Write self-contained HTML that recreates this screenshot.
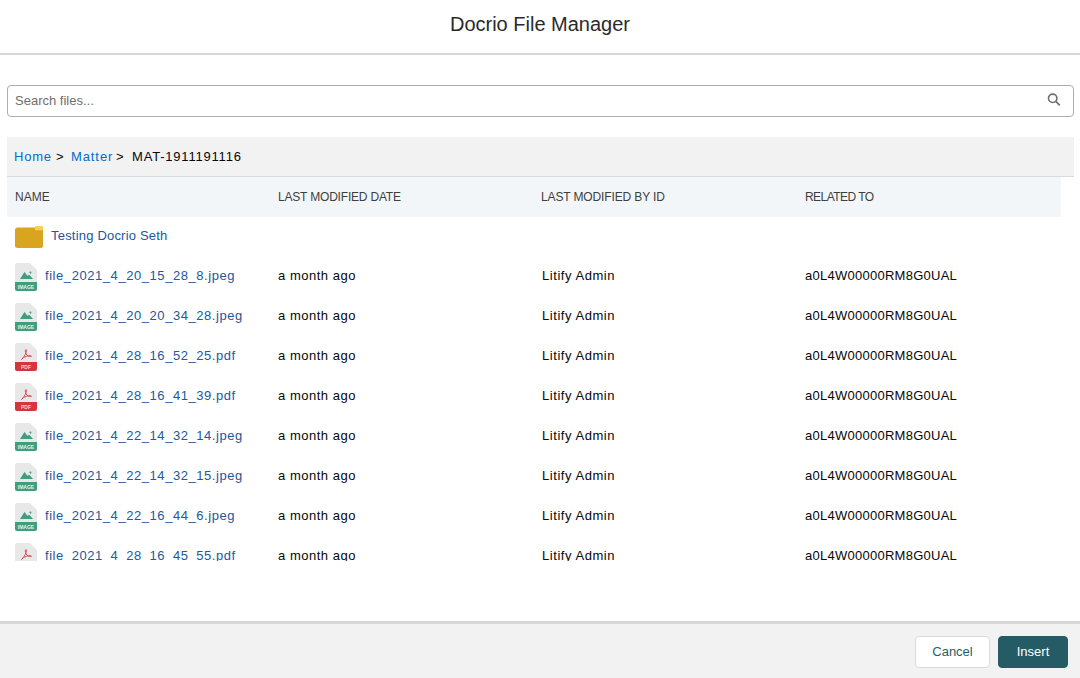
<!DOCTYPE html>
<html><head><meta charset="utf-8">
<style>
*{box-sizing:border-box;margin:0;padding:0}
html,body{width:1080px;height:678px;overflow:hidden;background:#fff;font-family:"Liberation Sans",sans-serif;color:#080707}
.a{position:absolute;white-space:nowrap}
.title{left:0;top:0;width:1080px;height:53px;text-align:center;font-size:20px;line-height:48px;color:#2a2a2a}
.hline{left:0;top:53px;width:1080px;height:2px;background:#d9d7d5}
.search{left:7px;top:85px;width:1067px;height:32px;border:1px solid #b0adab;border-radius:4px;background:#fff}
.ph{left:7px;top:0;line-height:30px;font-size:13px;color:#706e6b}
.crumb{left:7px;top:137px;width:1067px;height:40px;background:#f3f2f2;border-bottom:1px solid #dddbda}
.ct{top:137px;line-height:39px;font-size:13px}
.lk{color:#006dcc}
.thead{left:7px;top:177px;width:1054px;height:40px;background:#f3f6f9}
.th{top:177px;line-height:40px;font-size:12px;color:#3e3e3c}
.clip{left:0;top:217px;width:1080px;height:344px;overflow:hidden}
.row{position:absolute;left:0;width:1080px;height:40px}
.td{top:0;line-height:40px;font-size:13px;color:#080707}
.nm{color:#23579e}
.foot{left:0;top:621px;width:1080px;height:57px;background:#f2f2f2;border-top:3px solid #d9d8d6}
.btn{height:32px;border-radius:4px;font-size:13px;line-height:30px;text-align:center}
.cancel{left:915px;top:636px;width:75px;background:#fff;border:1px solid #dddbda;color:#235f6b}
.insert{left:998px;top:636px;width:70px;background:#255b65;border:1px solid #255b65;color:#fff}
</style></head><body>
<div class="a title">Docrio File Manager</div>
<div class="a hline"></div>
<div class="a search"><span class="a ph">Search files...</span><svg class="a" style="left:1029px;top:3px" width="24" height="24" viewBox="0 0 24 24"><circle cx="15.7" cy="9.3" r="4.2" fill="none" stroke="#706e6b" stroke-width="1.6"/><line x1="18.8" y1="12.4" x2="22.8" y2="16.4" stroke="#706e6b" stroke-width="1.6"/></svg></div>
<div class="a crumb"></div>
<span class="a ct lk" style="left:14px;letter-spacing:0.8px">Home</span>
<span class="a ct" style="left:56px">&gt;</span>
<span class="a ct lk" style="left:71px;letter-spacing:0.9px">Matter</span>
<span class="a ct" style="left:116px">&gt;</span>
<span class="a ct" style="left:132px;letter-spacing:0.8px">MAT-1911191116</span>
<div class="a thead"></div>
<span class="a th" style="left:15px">NAME</span>
<span class="a th" style="left:278px;letter-spacing:-0.19px">LAST MODIFIED DATE</span>
<span class="a th" style="left:541px;letter-spacing:-0.13px">LAST MODIFIED BY ID</span>
<span class="a th" style="left:805px;letter-spacing:-0.55px">RELATED TO</span>
<div class="a clip">
<div class="row" style="top:-1px"><svg class="a" style="left:15px;top:10px" width="28" height="22" viewBox="0 0 28 22"><rect x="0" y="1.5" width="28" height="20.5" rx="2.5" fill="#d9a521"/><path d="M20 0H27Q28 0 28 1V4.2H20Z" fill="#f8ce5a"/></svg><span class="a td nm" style="left:51px;letter-spacing:0.2px">Testing Docrio Seth</span></div>
<div class="row" style="top:39px"><svg class="a" style="left:15px;top:7px" width="22" height="28" viewBox="0 0 22 28"><path d="M2 0H15L22 7V26Q22 28 20 28H2Q0 28 0 26V2Q0 0 2 0Z" fill="#e8e8e8"/><path d="M0 19H22V26Q22 28 20 28H2Q0 28 0 26Z" fill="#3e9e7e"/><path d="M5 16L9.5 9L12.5 13L14 11.5L18 16Z" fill="#3e9e7e"/><circle cx="15.5" cy="9.5" r="1" fill="#3e9e7e"/><text x="11" y="26" font-size="5" font-weight="bold" fill="#e0f0ea" text-anchor="middle" font-family="Liberation Sans">IMAGE</text></svg><span class="a td nm" style="left:45px;letter-spacing:0.56px">file_2021_4_20_15_28_8.jpeg</span><span class="a td" style="left:278px;letter-spacing:0.52px">a month ago</span><span class="a td" style="left:542px;letter-spacing:0.55px">Litify Admin</span><span class="a td" style="left:805px;letter-spacing:0.26px">a0L4W00000RM8G0UAL</span></div>
<div class="row" style="top:79px"><svg class="a" style="left:15px;top:7px" width="22" height="28" viewBox="0 0 22 28"><path d="M2 0H15L22 7V26Q22 28 20 28H2Q0 28 0 26V2Q0 0 2 0Z" fill="#e8e8e8"/><path d="M0 19H22V26Q22 28 20 28H2Q0 28 0 26Z" fill="#3e9e7e"/><path d="M5 16L9.5 9L12.5 13L14 11.5L18 16Z" fill="#3e9e7e"/><circle cx="15.5" cy="9.5" r="1" fill="#3e9e7e"/><text x="11" y="26" font-size="5" font-weight="bold" fill="#e0f0ea" text-anchor="middle" font-family="Liberation Sans">IMAGE</text></svg><span class="a td nm" style="left:45px;letter-spacing:0.56px">file_2021_4_20_20_34_28.jpeg</span><span class="a td" style="left:278px;letter-spacing:0.52px">a month ago</span><span class="a td" style="left:542px;letter-spacing:0.55px">Litify Admin</span><span class="a td" style="left:805px;letter-spacing:0.26px">a0L4W00000RM8G0UAL</span></div>
<div class="row" style="top:119px"><svg class="a" style="left:15px;top:7px" width="22" height="28" viewBox="0 0 22 28"><path d="M2 0H15L22 7V26Q22 28 20 28H2Q0 28 0 26V2Q0 0 2 0Z" fill="#e8e8e8"/><path d="M0 19H22V26Q22 28 20 28H2Q0 28 0 26Z" fill="#d6353d"/><path d="M11 6.5C10 6.5 10.2 9 11 10.8C12 12.8 14 13.6 15.8 13.6C17 13.6 16.6 12.6 15 12.6C13 12.6 9.5 13.8 7.2 15.4C6 16.3 6.3 16.9 7.1 16.1C8.3 14.8 10.5 11.5 11.1 9.5C11.6 7.6 11.6 6.5 11 6.5Z" stroke="#dc5258" stroke-width="1" fill="none" stroke-linejoin="round"/><text x="11" y="26" font-size="5" font-weight="bold" fill="#f6d0d2" text-anchor="middle" font-family="Liberation Sans">PDF</text></svg><span class="a td nm" style="left:45px;letter-spacing:0.56px">file_2021_4_28_16_52_25.pdf</span><span class="a td" style="left:278px;letter-spacing:0.52px">a month ago</span><span class="a td" style="left:542px;letter-spacing:0.55px">Litify Admin</span><span class="a td" style="left:805px;letter-spacing:0.26px">a0L4W00000RM8G0UAL</span></div>
<div class="row" style="top:159px"><svg class="a" style="left:15px;top:7px" width="22" height="28" viewBox="0 0 22 28"><path d="M2 0H15L22 7V26Q22 28 20 28H2Q0 28 0 26V2Q0 0 2 0Z" fill="#e8e8e8"/><path d="M0 19H22V26Q22 28 20 28H2Q0 28 0 26Z" fill="#d6353d"/><path d="M11 6.5C10 6.5 10.2 9 11 10.8C12 12.8 14 13.6 15.8 13.6C17 13.6 16.6 12.6 15 12.6C13 12.6 9.5 13.8 7.2 15.4C6 16.3 6.3 16.9 7.1 16.1C8.3 14.8 10.5 11.5 11.1 9.5C11.6 7.6 11.6 6.5 11 6.5Z" stroke="#dc5258" stroke-width="1" fill="none" stroke-linejoin="round"/><text x="11" y="26" font-size="5" font-weight="bold" fill="#f6d0d2" text-anchor="middle" font-family="Liberation Sans">PDF</text></svg><span class="a td nm" style="left:45px;letter-spacing:0.56px">file_2021_4_28_16_41_39.pdf</span><span class="a td" style="left:278px;letter-spacing:0.52px">a month ago</span><span class="a td" style="left:542px;letter-spacing:0.55px">Litify Admin</span><span class="a td" style="left:805px;letter-spacing:0.26px">a0L4W00000RM8G0UAL</span></div>
<div class="row" style="top:199px"><svg class="a" style="left:15px;top:7px" width="22" height="28" viewBox="0 0 22 28"><path d="M2 0H15L22 7V26Q22 28 20 28H2Q0 28 0 26V2Q0 0 2 0Z" fill="#e8e8e8"/><path d="M0 19H22V26Q22 28 20 28H2Q0 28 0 26Z" fill="#3e9e7e"/><path d="M5 16L9.5 9L12.5 13L14 11.5L18 16Z" fill="#3e9e7e"/><circle cx="15.5" cy="9.5" r="1" fill="#3e9e7e"/><text x="11" y="26" font-size="5" font-weight="bold" fill="#e0f0ea" text-anchor="middle" font-family="Liberation Sans">IMAGE</text></svg><span class="a td nm" style="left:45px;letter-spacing:0.56px">file_2021_4_22_14_32_14.jpeg</span><span class="a td" style="left:278px;letter-spacing:0.52px">a month ago</span><span class="a td" style="left:542px;letter-spacing:0.55px">Litify Admin</span><span class="a td" style="left:805px;letter-spacing:0.26px">a0L4W00000RM8G0UAL</span></div>
<div class="row" style="top:239px"><svg class="a" style="left:15px;top:7px" width="22" height="28" viewBox="0 0 22 28"><path d="M2 0H15L22 7V26Q22 28 20 28H2Q0 28 0 26V2Q0 0 2 0Z" fill="#e8e8e8"/><path d="M0 19H22V26Q22 28 20 28H2Q0 28 0 26Z" fill="#3e9e7e"/><path d="M5 16L9.5 9L12.5 13L14 11.5L18 16Z" fill="#3e9e7e"/><circle cx="15.5" cy="9.5" r="1" fill="#3e9e7e"/><text x="11" y="26" font-size="5" font-weight="bold" fill="#e0f0ea" text-anchor="middle" font-family="Liberation Sans">IMAGE</text></svg><span class="a td nm" style="left:45px;letter-spacing:0.56px">file_2021_4_22_14_32_15.jpeg</span><span class="a td" style="left:278px;letter-spacing:0.52px">a month ago</span><span class="a td" style="left:542px;letter-spacing:0.55px">Litify Admin</span><span class="a td" style="left:805px;letter-spacing:0.26px">a0L4W00000RM8G0UAL</span></div>
<div class="row" style="top:279px"><svg class="a" style="left:15px;top:7px" width="22" height="28" viewBox="0 0 22 28"><path d="M2 0H15L22 7V26Q22 28 20 28H2Q0 28 0 26V2Q0 0 2 0Z" fill="#e8e8e8"/><path d="M0 19H22V26Q22 28 20 28H2Q0 28 0 26Z" fill="#3e9e7e"/><path d="M5 16L9.5 9L12.5 13L14 11.5L18 16Z" fill="#3e9e7e"/><circle cx="15.5" cy="9.5" r="1" fill="#3e9e7e"/><text x="11" y="26" font-size="5" font-weight="bold" fill="#e0f0ea" text-anchor="middle" font-family="Liberation Sans">IMAGE</text></svg><span class="a td nm" style="left:45px;letter-spacing:0.56px">file_2021_4_22_16_44_6.jpeg</span><span class="a td" style="left:278px;letter-spacing:0.52px">a month ago</span><span class="a td" style="left:542px;letter-spacing:0.55px">Litify Admin</span><span class="a td" style="left:805px;letter-spacing:0.26px">a0L4W00000RM8G0UAL</span></div>
<div class="row" style="top:319px"><svg class="a" style="left:15px;top:7px" width="22" height="28" viewBox="0 0 22 28"><path d="M2 0H15L22 7V26Q22 28 20 28H2Q0 28 0 26V2Q0 0 2 0Z" fill="#e8e8e8"/><path d="M0 19H22V26Q22 28 20 28H2Q0 28 0 26Z" fill="#d6353d"/><path d="M11 6.5C10 6.5 10.2 9 11 10.8C12 12.8 14 13.6 15.8 13.6C17 13.6 16.6 12.6 15 12.6C13 12.6 9.5 13.8 7.2 15.4C6 16.3 6.3 16.9 7.1 16.1C8.3 14.8 10.5 11.5 11.1 9.5C11.6 7.6 11.6 6.5 11 6.5Z" stroke="#dc5258" stroke-width="1" fill="none" stroke-linejoin="round"/><text x="11" y="26" font-size="5" font-weight="bold" fill="#f6d0d2" text-anchor="middle" font-family="Liberation Sans">PDF</text></svg><span class="a td nm" style="left:45px;letter-spacing:0.56px">file_2021_4_28_16_45_55.pdf</span><span class="a td" style="left:278px;letter-spacing:0.52px">a month ago</span><span class="a td" style="left:542px;letter-spacing:0.55px">Litify Admin</span><span class="a td" style="left:805px;letter-spacing:0.26px">a0L4W00000RM8G0UAL</span></div>
</div>
<div class="a foot"></div>
<div class="a btn cancel">Cancel</div>
<div class="a btn insert">Insert</div>
</body></html>
